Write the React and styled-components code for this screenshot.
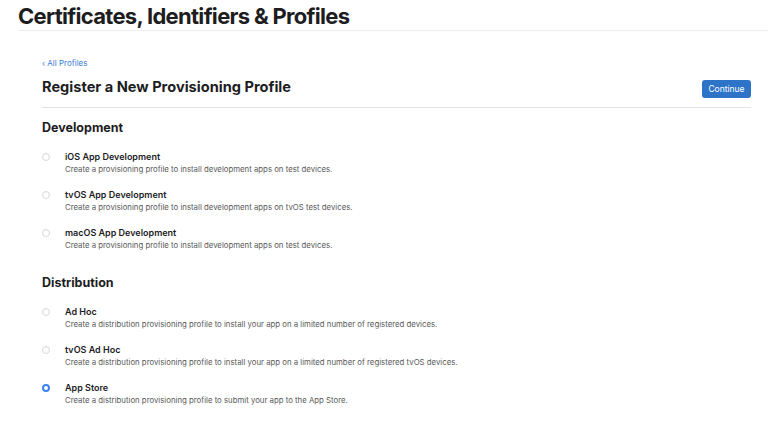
import React from 'react';
import styled, { createGlobalStyle } from 'styled-components';

const GlobalStyle = createGlobalStyle`
  html, body {
    margin: 0;
    padding: 0;
    background: #fff;
    overflow: hidden;
  }
  body {
    font-family: Inter, "Liberation Sans", Arial, sans-serif;
    color: #1d1d1f;
    -webkit-font-smoothing: antialiased;
  }
`;

const Page = styled.div`
  width: 768px;
  height: 422px;
  overflow: hidden;
`;

const Header = styled.header`
  margin-left: 18px;
  padding-top: 2px;
  border-bottom: 1px solid #ececec;
  height: 31px;
  box-sizing: border-box;
`;

const HeaderTitle = styled.h1`
  margin: 0;
  font-size: 22px;
  line-height: 28px;
  font-weight: 700;
  letter-spacing: -0.7px;
`;

const Main = styled.main`
  padding: 0 17px 0 42px;
`;

const BackLink = styled.a`
  display: block;
  margin-top: 27px;
  font-size: 8px;
  line-height: 10px;
  color: #3a7bd5;
  text-decoration: none;
`;

const TitleRow = styled.div`
  display: flex;
  align-items: flex-start;
  justify-content: space-between;
  padding: 10px 0 9px;
  border-bottom: 1px solid #e3e3e3;
`;

const PageTitle = styled.h2`
  margin: 0;
  font-size: 14.6px;
  line-height: 18px;
  font-weight: 700;
`;

const Button = styled.button`
  font-family: inherit;
  font-size: 8.5px;
  color: #fff;
  background: #2d73c8;
  border: none;
  border-radius: 3px;
  width: 49px;
  height: 18px;
  padding: 0;
  margin-top: 2px;
`;

const SectionTitle = styled.h3`
  margin: 0;
  font-size: 12.5px;
  line-height: 16px;
  font-weight: 700;
  padding-top: ${(p) => p.$top}px;
  padding-bottom: 15px;
`;

const OptionList = styled.div`
  display: flex;
  flex-direction: column;
  gap: 14px;
`;

const Option = styled.label`
  display: flex;
  align-items: flex-start;
  gap: 15px;
`;

const Radio = styled.span`
  flex: none;
  box-sizing: border-box;
  width: 8px;
  height: 8px;
  margin-top: 2px;
  border-radius: 50%;
  border: ${(p) => (p.$checked ? '2.5px solid #3d82f0' : '1px solid #d8d8d8')};
  background: #fff;
  box-shadow: ${(p) => (p.$checked ? 'none' : 'inset 0 0.5px 1px rgba(0,0,0,0.06)')};
`;

const OptionText = styled.div`
  display: flex;
  flex-direction: column;
`;

const OptionName = styled.span`
  font-size: 9px;
  line-height: 12px;
  font-weight: 600;
  color: #1d1d1f;
`;

const OptionDesc = styled.span`
  font-size: 7.8px;
  line-height: 12px;
  color: #5a5a5a;
`;

const sections = [
  {
    title: 'Development',
    top: 12,
    options: [
      ['iOS App Development', 'Create a provisioning profile to install development apps on test devices.'],
      ['tvOS App Development', 'Create a provisioning profile to install development apps on tvOS test devices.'],
      ['macOS App Development', 'Create a provisioning profile to install development apps on test devices.'],
    ],
  },
  {
    title: 'Distribution',
    top: 24,
    options: [
      ['Ad Hoc', 'Create a distribution provisioning profile to install your app on a limited number of registered devices.'],
      ['tvOS Ad Hoc', 'Create a distribution provisioning profile to install your app on a limited number of registered tvOS devices.'],
      ['App Store', 'Create a distribution provisioning profile to submit your app to the App Store.', true],
      ['tvOS App Store', 'Create a distribution provisioning profile to submit your tvOS app to the App Store.'],
    ],
  },
];

export default function App() {
  return (
    <Page>
      <GlobalStyle />
      <Header>
        <HeaderTitle>Certificates, Identifiers &amp; Profiles</HeaderTitle>
      </Header>
      <Main>
        <BackLink href="#">‹ All Profiles</BackLink>
        <TitleRow>
          <PageTitle>Register a New Provisioning Profile</PageTitle>
          <Button>Continue</Button>
        </TitleRow>
        {sections.map((s) => (
          <section key={s.title}>
            <SectionTitle $top={s.top}>{s.title}</SectionTitle>
            <OptionList>
              {s.options.map(([name, desc, checked]) => (
                <Option key={name}>
                  <Radio $checked={checked} />
                  <OptionText>
                    <OptionName>{name}</OptionName>
                    <OptionDesc>{desc}</OptionDesc>
                  </OptionText>
                </Option>
              ))}
            </OptionList>
          </section>
        ))}
      </Main>
    </Page>
  );
}
